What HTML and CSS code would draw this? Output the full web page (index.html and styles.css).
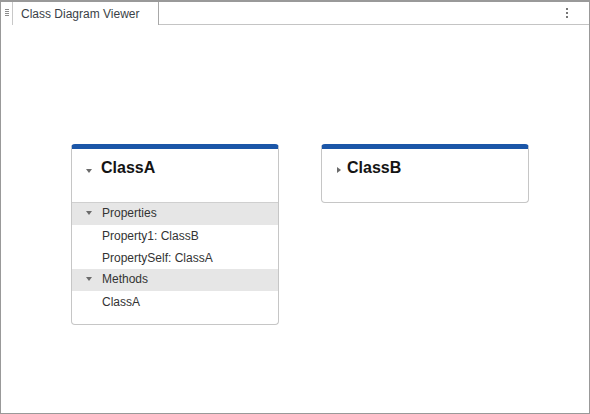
FILE: index.html
```html
<!DOCTYPE html>
<html lang="en">
<head>
<meta charset="utf-8">
<title>Class Diagram Viewer</title>
<link rel="stylesheet" href="styles.css">
</head>
<body>
<div class="window">
  <div class="header">
    <div class="grip"><span></span><span></span><span></span><span></span></div>
    <div class="tab">Class Diagram Viewer</div>
    <div class="spacer"></div>
    <div class="kebab"><span></span><span></span><span></span></div>
  </div>
  <div class="canvas">
    <div class="card card-a">
      <div class="card-head">
        <span class="tri-down tri-title"></span><span class="title">ClassA</span>
      </div>
      <div class="sections">
        <div class="band"><span class="tri-down"></span>Properties</div>
        <div class="item">Property1: ClassB</div>
        <div class="item">PropertySelf: ClassA</div>
        <div class="band"><span class="tri-down"></span>Methods</div>
        <div class="item">ClassA</div>
      </div>
    </div>
    <div class="card card-b">
      <div class="card-head head-b">
        <span class="tri-right"></span><span class="title">ClassB</span>
      </div>
    </div>
  </div>
</div>
</body>
</html>
```

FILE: styles.css
```css
* { box-sizing: border-box; }
html, body { margin: 0; padding: 0; background: #fff; }
body { font-family: "Liberation Sans", Arial, sans-serif; font-size: 12px; color: #333; }

.window {
  width: 590px;
  height: 414px;
  border: 1px solid #999;
  display: flex;
  flex-direction: column;
  background: #fff;
}

.header {
  display: flex;
  height: 24px;
  border-top: 1px solid #999;
  flex: none;
}

.grip {
  width: 11px;
  display: flex;
  flex-direction: column;
  gap: 1px;
  padding: 7px 0 0 4px;
}
.grip span { display: block; width: 4px; height: 1px; background: #8c8c8c; }

.tab {
  width: 147px;
  height: 23px;
  border-left: 1px solid #c8c8c8;
  border-right: 1px solid #a8a8a8;
  padding: 2px 0 0 8px;
  line-height: 21px;
  color: #3a3f47;
  white-space: nowrap;
}

.spacer {
  flex: 1;
  height: 23px;
  border-bottom: 1px solid #c4c4c4;
}

.kebab {
  width: 23px;
  height: 23px;
  border-bottom: 1px solid #c4c4c4;
  display: flex;
  flex-direction: column;
  gap: 2px;
  padding: 6px 0 0 0;
}
.kebab span { display: block; width: 2px; height: 2px; background: #777; }

.canvas {
  position: relative;
  flex: 1;
}

.card {
  position: absolute;
  top: 119px;
  width: 208px;
  border: 1px solid #c6c6c6;
  border-top: 5px solid #1b56a8;
  border-radius: 4px;
  background: #fff;
  overflow: hidden;
}
.card-a { left: 70px; }
.card-b { left: 320px; }

.card-head {
  height: 53px;
  padding: 9px 0 0 14px;
  display: flex;
  align-items: flex-start;
}
.head-b { padding-left: 15px; }

.title {
  font-size: 16px;
  font-weight: bold;
  line-height: 20px;
  color: #141414;
}

.tri-down {
  display: inline-block;
  width: 0;
  height: 0;
  border-left: 3.5px solid transparent;
  border-right: 3.5px solid transparent;
  border-top: 4px solid #6b6b6b;
}
.tri-title { margin: 11px 9px 0 0; }

.tri-right {
  display: inline-block;
  width: 0;
  height: 0;
  border-top: 3.5px solid transparent;
  border-bottom: 3.5px solid transparent;
  border-left: 4px solid #6b6b6b;
  margin: 9px 6px 0 0;
}

.sections {
  border-top: 1px solid #cfcfcf;
  padding-bottom: 11px;
}

.band {
  height: 22px;
  background: #e6e6e6;
  line-height: 20px;
  padding-left: 14px;
  display: flex;
  align-items: center;
  padding-bottom: 3px;
}
.band .tri-down { margin-right: 10px; margin-top: 1px; }

.item {
  height: 22px;
  line-height: 21px;
  padding-top: 1px;
  padding-left: 30px;
}
```
